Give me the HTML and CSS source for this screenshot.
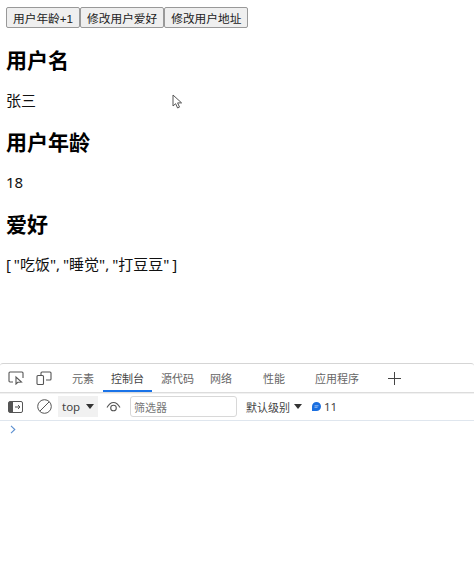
FILE: index.html
```html
<!DOCTYPE html>
<html>
<head>
  <title>用户信息</title>
  <link rel="stylesheet" href="styles.css">
</head>
<body>
  <div class="page">
    <div class="btns">
      <button>用户年龄+1</button><button>修改用户爱好</button><button>修改用户地址</button>
    </div>
    <h2>用户名</h2>
    <p>张三</p>
    <h2>用户年龄</h2>
    <p>18</p>
    <h2>爱好</h2>
    <p>[ "吃饭", "睡觉", "打豆豆" ]</p>
    <svg class="cursor" width="11" height="15" viewBox="0 0 11 15">
      <path d="M1 1v11l2.6-2.3L5.6 14l1.9-.9-1.9-4.2H9.6z" fill="#fff" stroke="#555" stroke-width="1"/>
    </svg>
  </div>

  <div class="devtools">
    <div class="tabs">
      <svg class="tool-icon first" width="16" height="14" viewBox="0 0 16 14">
        <path d="M5 11H2a1 1 0 0 1-1-1V2a1 1 0 0 1 1-1h12a1 1 0 0 1 1 1v5" fill="none" stroke="#555" stroke-width="1.1"/>
        <path d="M8 6v7l1.8-1.7L13.5 11z" fill="none" stroke="#555" stroke-width="1.1"/>
      </svg>
      <svg class="tool-icon" width="16" height="14" viewBox="0 0 16 14">
        <path d="M5 4V2a1 1 0 0 1 1-1h8a1 1 0 0 1 1 1v6a1 1 0 0 1-1 1h-4" fill="none" stroke="#555" stroke-width="1.1"/>
        <rect x="1" y="4.5" width="6.5" height="9" rx="1" fill="none" stroke="#555" stroke-width="1.1"/>
      </svg>
      <span class="tab tab-a">元素</span>
      <span class="tab tab-b active">控制台</span>
      <span class="tab tab-c">源代码</span>
      <span class="tab tab-d">网络</span>
      <span class="tab tab-e">性能</span>
      <span class="tab tab-f">应用程序</span>
      <svg class="plus" width="13" height="13" viewBox="0 0 13 13">
        <path d="M6.5 0v13M0 6.500h13" stroke="#444" stroke-width="1"/>
      </svg>
    </div>
    <div class="toolbar">
      <svg class="side-icon" width="15" height="12" viewBox="0 0 15 12">
        <rect x=".5" y=".5" width="14" height="11" rx="1.500" fill="#fff" stroke="#555"/>
        <path d="M1 1h4v10H1z" fill="#555"/>
        <path d="M7 6h5M10 4l2 2-2 2" fill="none" stroke="#555"/>
      </svg>
      <svg class="clear-icon" width="15" height="15" viewBox="0 0 15 15">
        <circle cx="7.500" cy="7.500" r="6.800" fill="none" stroke="#555" stroke-width="1"/>
        <path d="M2.800 12.200l9.400-9.400" stroke="#555" stroke-width="1"/>
      </svg>
      <div class="context">top<span class="arrow"></span></div>
      <svg class="eye" width="15" height="11" viewBox="0 0 15 11">
        <path d="M1 6.500C3 3 5 1.500 7.500 1.500S12 3 14 6.500" fill="none" stroke="#555" stroke-width="1.1"/>
        <circle cx="7.500" cy="7" r="2.800" fill="none" stroke="#555" stroke-width="1.1"/>
      </svg>
      <div class="filter">筛选器</div>
      <div class="level">默认级别<span class="arrow"></span></div>
      <svg class="msg-icon" width="9" height="9" viewBox="0 0 9 9">
        <path d="M4.500 0a4.500 4.500 0 0 1 0 9H0V4.500A4.500 4.500 0 0 1 4.500 0z" fill="#1a6fe0"/>
        <path d="M2.500 3.800h4M2.500 5.300h3" stroke="#cfe0fa" stroke-width=".7"/>
      </svg>
      <span class="count">11</span>
    </div>
    <div class="prompt">
      <svg width="6" height="9" viewBox="0 0 6 9">
        <path d="M1 .8l3.800 3.700L1 8.200" fill="none" stroke="#5b8fd0" stroke-width="1.100"/>
      </svg>
    </div>
  </div>
</body>
</html>
```

FILE: styles.css
```css
html, body {
  margin: 0;
  height: 573px;
  overflow: hidden;
  background: #fff;
  font-family: "Noto Sans", "Noto Sans CJK SC", sans-serif;
}
.page {
  position: relative;
  height: 356px;
  padding: 7px 0 0 6px;
  box-sizing: border-box;
  color: #111;
}
.btns {
  display: flex;
  height: 21px;
}
button {
  padding: 0 6px;
  height: 21px;
  font-family: "Liberation Sans", "Noto Sans CJK SC", sans-serif;
  font-size: 11.700px;
  color: #222;
  background: #efefef;
  border: 1px solid #999;
  border-radius: 2px;
  white-space: nowrap;
}
h2 {
  margin: 0;
  font-size: 21px;
  line-height: 28px;
  font-weight: bold;
  color: #000;
}
.btns + h2 {
  margin-top: 18px;
}
p {
  margin: 17px 0 19px;
  font-size: 15px;
  line-height: 18px;
  word-spacing: -1px;
}
.cursor {
  position: absolute;
  left: 172px;
  top: 94px;
}
.devtools {
  margin-top: 7px;
  border-top: 1px solid #d5d5d5;
  border-radius: 3px 3px 0 0;
  font-size: 11px;
  color: #666;
}
.tabs {
  display: flex;
  align-items: center;
  height: 28px;
  border-bottom: 1px solid #dcdcdc;
  box-shadow: 0 1px 0 #f1f1f1;
}
.tool-icon.first {
  margin-left: 8px;
}
.tool-icon {
  margin-right: 12px;
}
.tab {
  display: flex;
  align-items: center;
  height: 28px;
  box-sizing: border-box;
  white-space: nowrap;
}
.tab-a { margin-left: 8px; }
.tab-b { margin-left: 9px; padding: 0 8px; }
.tab-c { margin-left: 9px; }
.tab-d { margin-left: 16px; }
.tab-e { margin-left: 31px; }
.tab-f { margin-left: 30px; }
.active {
  color: #444;
  border-bottom: 2px solid #1a73e8;
  padding-top: 2px;
}
.plus {
  margin-left: 29px;
}
.toolbar {
  position: relative;
  display: flex;
  align-items: center;
  height: 27px;
  border-bottom: 1px solid #dfe6ee;
  color: #444;
}
.side-icon {
  margin-left: 8px;
}
.clear-icon {
  margin-left: 14px;
}
.context {
  display: flex;
  align-items: center;
  width: 40px;
  height: 21px;
  margin-left: 6px;
  padding-left: 4px;
  box-sizing: border-box;
  background: #f1f1f1;
  font-size: 11.500px;
}
.arrow {
  width: 0;
  height: 0;
  margin-left: 6px;
  border-left: 4px solid transparent;
  border-right: 4px solid transparent;
  border-top: 5px solid #333;
}
.eye {
  margin-left: 8px;
}
.filter {
  display: flex;
  align-items: center;
  width: 107px;
  height: 21px;
  margin-left: 9px;
  padding-left: 3px;
  box-sizing: border-box;
  border: 1px solid #d8d8d8;
  border-radius: 3px;
  color: #777;
}
.level {
  display: flex;
  align-items: center;
  margin-left: 9px;
  white-space: nowrap;
}
.level .arrow {
  margin-left: 4px;
}
.msg-icon {
  margin-left: 10px;
}
.count {
  margin-left: 3px;
  font-size: 11.500px;
}
.prompt {
  padding: 4px 0 0 10px;
  line-height: 0;
}
```
